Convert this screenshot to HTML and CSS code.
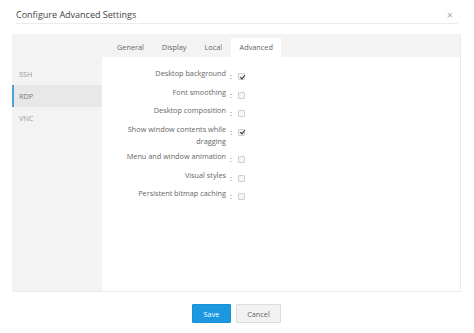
FILE: index.html
```html
<!DOCTYPE html>
<html lang="en">
<head>
    <meta charset="UTF-8">
    <meta name="viewport" content="width=device-width, initial-scale=1.0">
    <title>Configure Advanced Settings</title>
    <link rel="stylesheet" href="styles.css">
</head>
<body>
    <div class="dialog">
        <div class="header">
            <span class="title">Configure Advanced Settings</span>
            <span class="close">&times;</span>
        </div>

        <div class="panel">
            <ul class="sidebar">
                <li>SSH</li>
                <li class="active">RDP</li>
                <li>VNC</li>
            </ul>

            <div class="tabs">
                <span class="tab">General</span>
                <span class="tab">Display</span>
                <span class="tab">Local</span>
                <span class="tab active">Advanced</span>
            </div>

            <div class="content">
                <div class="row">
                    <label class="label" for="bg">Desktop background</label>
                    <span class="colon">:</span>
                    <span class="check"><input type="checkbox" id="bg" checked></span>
                </div>
                <div class="row">
                    <label class="label" for="font">Font smoothing</label>
                    <span class="colon">:</span>
                    <span class="check"><input type="checkbox" id="font"></span>
                </div>
                <div class="row">
                    <label class="label" for="comp">Desktop composition</label>
                    <span class="colon">:</span>
                    <span class="check"><input type="checkbox" id="comp"></span>
                </div>
                <div class="row">
                    <label class="label" for="drag">Show window contents while dragging</label>
                    <span class="colon">:</span>
                    <span class="check"><input type="checkbox" id="drag" checked></span>
                </div>
                <div class="row">
                    <label class="label" for="anim">Menu and window animation</label>
                    <span class="colon">:</span>
                    <span class="check"><input type="checkbox" id="anim"></span>
                </div>
                <div class="row">
                    <label class="label" for="styles">Visual styles</label>
                    <span class="colon">:</span>
                    <span class="check"><input type="checkbox" id="styles"></span>
                </div>
                <div class="row">
                    <label class="label" for="cache">Persistent bitmap caching</label>
                    <span class="colon">:</span>
                    <span class="check"><input type="checkbox" id="cache"></span>
                </div>
            </div>
        </div>

        <div class="footer">
            <button class="btn save">Save</button>
            <button class="btn cancel">Cancel</button>
        </div>
    </div>
</body>
</html>
```

FILE: styles.css
```css
body {
    margin: 0;
    font-family: "Open Sans", "Noto Sans", sans-serif;
    background: #fff;
    color: #666;
}
.dialog {
    padding: 0 13px 0 12px;
}
.header {
    display: flex;
    justify-content: space-between;
    align-items: center;
    height: 24px;
    margin: 0 3px 0 4px;
    border-bottom: 1px solid #ececec;
    box-sizing: border-box;
    padding-top: 6px;
}
.title {
    font-size: 9px;
    line-height: 16px;
    color: #444;
}
.close {
    font-size: 11px;
    line-height: 16px;
    color: #aaa;
    margin-right: 5px;
}
.panel {
    display: grid;
    grid-template-columns: 90px 1fr;
    grid-template-rows: 23px 1fr;
    height: 258px;
    margin-top: 10px;
    background: #f3f3f3;
    border-right: 1px solid #ebebeb;
    border-bottom: 1px solid #ebebeb;
    box-sizing: border-box;
}
.sidebar {
    grid-row: 1 / 3;
    list-style: none;
    margin: 0;
    padding: 29px 0 0;
}
.sidebar li {
    height: 22px;
    line-height: 22px;
    font-size: 7.3px;
    color: #999;
    padding-left: 5px;
    border-left: 2px solid transparent;
}
.sidebar li.active {
    background: #e8e8e8;
    border-left-color: #4aa2d9;
    color: #777;
}
.tabs {
    display: flex;
    align-items: flex-end;
    padding-left: 6px;
}
.tab {
    height: 19px;
    line-height: 19px;
    padding: 0 9px;
    font-size: 7.3px;
    color: #666;
}
.tab.active {
    background: #fff;
    padding: 0 8.5px;
}
.content {
    background: #fff;
    padding: 10px 0 0 24px;
    display: flex;
    flex-direction: column;
    gap: 3.5px;
}
.row {
    display: flex;
    align-items: flex-start;
}
.label {
    width: 100px;
    text-align: right;
    font-size: 7.3px;
    line-height: 12px;
    color: #666;
}
.colon {
    font-size: 7.3px;
    line-height: 12px;
    padding: 3px 0 0 4px;
    width: 8px;
    color: #666;
}
.check {
    padding: 6px 0 2px;
    height: 7px;
    display: flex;
}
.check input {
    appearance: none;
    margin: 0;
    width: 7px;
    height: 7px;
    border: 1px solid #cfcfcf;
    border-radius: 1px;
    background: #f6f6f6;
    box-sizing: border-box;
    position: relative;
}
.check input:checked::after {
    content: "";
    position: absolute;
    left: 1.5px;
    top: -0.5px;
    width: 2px;
    height: 4px;
    border: solid #333;
    border-width: 0 1.5px 1.5px 0;
    transform: rotate(40deg);
}
.footer {
    display: flex;
    justify-content: center;
    gap: 5px;
    margin-top: 12px;
}
.btn {
    height: 19px;
    font-family: inherit;
    font-size: 7.3px;
    border-radius: 1px;
    padding: 0;
}
.save {
    width: 39px;
    background: #1b98e0;
    border: 1px solid #1890d6;
    color: #fff;
}
.cancel {
    width: 45px;
    background: #f2f2f2;
    border: 1px solid #ddd;
    color: #666;
}
```
